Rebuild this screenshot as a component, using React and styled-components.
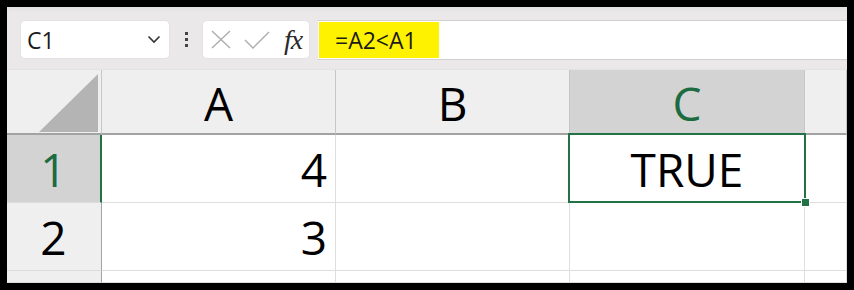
import React from "react";
import styled, { createGlobalStyle } from "styled-components";

const GlobalStyle = createGlobalStyle`
  html, body {
    margin: 0;
    padding: 0;
    background: #000;
  }
  body {
    font-family: "Open Sans", "Noto Sans", sans-serif;
  }
`;

const Frame = styled.div`
  margin: 7px;
  width: 840px;
  height: 276px;
  overflow: hidden;
  background: #fff;
  display: flex;
  flex-direction: column;
`;

const Toolbar = styled.div`
  height: 63px;
  box-sizing: border-box;
  padding: 13px 0 0 13px;
  background: linear-gradient(#e2e0e1 0px, #ebe8e9 5px, #ebe8e9 100%);
  display: flex;
  align-items: flex-start;
  border-bottom: 1px solid #e3e3e3;
`;

const NameBox = styled.div`
  width: 150px;
  height: 39px;
  box-sizing: border-box;
  background: #fff;
  border-radius: 5px;
  border: 1px solid #e4e2e3;
  display: flex;
  align-items: center;
  justify-content: space-between;
  padding: 0 8px 0 6px;
  font-size: 23px;
  color: #1a1a1a;
`;

const Dots = styled.div`
  width: 32px;
  height: 39px;
  display: flex;
  flex-direction: column;
  align-items: center;
  justify-content: center;
  gap: 3px;
  & > span {
    width: 3px;
    height: 3px;
    background: #444;
  }
`;

const FxBox = styled.div`
  width: 108px;
  height: 39px;
  box-sizing: border-box;
  background: #fff;
  border-radius: 5px;
  border: 1px solid #e4e2e3;
  display: flex;
  align-items: center;
  padding: 0 6px 0 8px;
  gap: 13px;
`;

const Fx = styled.span`
  font-family: "Liberation Serif", "DejaVu Serif", serif;
  font-style: italic;
  font-size: 28px;
  color: #2a2a2a;
  margin-left: 1px;
  letter-spacing: -1px;
`;

const FormulaBar = styled.div`
  flex: 1;
  margin-left: 8px;
  height: 40px;
  box-sizing: border-box;
  background: #fff;
  border-top: 1px solid #d2d0d1;
  border-bottom: 1px solid #d2d0d1;
  display: flex;
  align-items: stretch;
  padding: 1px 0;
`;

const Highlight = styled.span`
  background: #fff200;
  width: 120px;
  box-sizing: border-box;
  padding-left: 16px;
  display: flex;
  align-items: center;
  font-size: 23px;
  color: #1a1a1a;
  margin-left: 1px;
`;

const Sheet = styled.div`
  flex: 1;
  display: grid;
  grid-template-columns: 95px 234px 234px 235px 1fr;
  grid-template-rows: 65px 68px 68px 1fr;
  font-size: 46px;
  color: #000;
`;

const Corner = styled.div`
  background: #efefef;
  border-right: 1px solid #c6c6c6;
  border-bottom: 2px solid #a3a3a3;
  display: flex;
  align-items: flex-end;
  justify-content: flex-end;
  padding: 0 3px 1px 0;
`;

const ColHead = styled.div`
  background: ${(p) => (p.$active ? "#d3d3d3" : "#efefef")};
  color: ${(p) => (p.$active ? "#1d6b40" : "#000")};
  border-right: 1px solid #c6c6c6;
  border-bottom: 2px solid #a3a3a3;
  display: flex;
  align-items: center;
  justify-content: center;
  padding-top: 2px;
`;

const RowHead = styled.div`
  background: ${(p) => (p.$active ? "#d3d3d3" : "#efefef")};
  color: ${(p) => (p.$active ? "#1d6b40" : "#000")};
  border-right: ${(p) => (p.$active ? "2px solid #217346" : "1px solid #a3a3a3")};
  border-bottom: 1px solid #dcdcdc;
  display: flex;
  align-items: center;
  justify-content: center;
  padding-right: ${(p) => (p.$active ? "0" : "1px")};
`;

const Cell = styled.div`
  position: relative;
  border-right: 1px solid #dedede;
  border-bottom: 1px solid #dedede;
  display: flex;
  align-items: center;
  justify-content: ${(p) => (p.$align === "right" ? "flex-end" : "center")};
  padding-right: ${(p) => (p.$align === "right" ? "8px" : "0")};
`;

const Selection = styled.div`
  position: absolute;
  z-index: 2;
  left: -2px;
  top: -2px;
  right: -2px;
  bottom: -1px;
  border: 2px solid #217346;
  pointer-events: none;
`;

const Handle = styled.span`
  position: absolute;
  z-index: 3;
  display: block;
  right: -5px;
  bottom: -5px;
  width: 7px;
  height: 7px;
  background: #217346;
  box-shadow: 1px 1px 0 #fff, -1px -1px 0 #fff;
`;

const Chevron = () => (
  <svg width="14" height="9" viewBox="0 0 14 9">
    <path d="M1.5 1.5 L7 7 L12.5 1.5" fill="none" stroke="#333" strokeWidth="1.6" />
  </svg>
);

const Cross = () => (
  <svg width="20" height="19" viewBox="0 0 20 19">
    <path d="M1 1 L19 18 M19 1 L1 18" stroke="#adadad" strokeWidth="1.4" fill="none" />
  </svg>
);

const Check = () => (
  <svg width="26" height="18" viewBox="0 0 26 18">
    <path d="M1 9 L9 17 L25 1" stroke="#adadad" strokeWidth="1.4" fill="none" />
  </svg>
);

const Triangle = () => (
  <svg width="59" height="58" viewBox="0 0 59 58">
    <polygon points="0,58 59,58 59,0" fill="#b4b4b4" />
  </svg>
);

const columns = ["A", "B", "C", "D"];
const rows = [
  { n: "1", cells: ["4", "", "TRUE", ""] },
  { n: "2", cells: ["3", "", "", ""] },
  { n: "", cells: ["", "", "", ""] },
];

export default function App() {
  return (
    <>
      <GlobalStyle />
      <Frame>
        <Toolbar>
          <NameBox>
            <span>C1</span>
            <Chevron />
          </NameBox>
          <Dots>
            <span />
            <span />
            <span />
          </Dots>
          <FxBox>
            <Cross />
            <Check />
            <Fx>fx</Fx>
          </FxBox>
          <FormulaBar>
            <Highlight>=A2&lt;A1</Highlight>
          </FormulaBar>
        </Toolbar>
        <Sheet>
          <Corner>
            <Triangle />
          </Corner>
          {columns.map((c) => (
            <ColHead key={c} $active={c === "C"}>
              {c === "D" ? "" : c}
            </ColHead>
          ))}
          {rows.map((r, ri) => (
            <React.Fragment key={ri}>
              <RowHead $active={r.n === "1"}>{r.n}</RowHead>
              {r.cells.map((v, ci) => (
                <Cell key={ci} $align={ci === 0 ? "right" : "center"}>
                  {v}
                  {ri === 0 && ci === 2 && (
                    <Selection>
                      <Handle />
                    </Selection>
                  )}
                </Cell>
              ))}
            </React.Fragment>
          ))}
        </Sheet>
      </Frame>
    </>
  );
}
